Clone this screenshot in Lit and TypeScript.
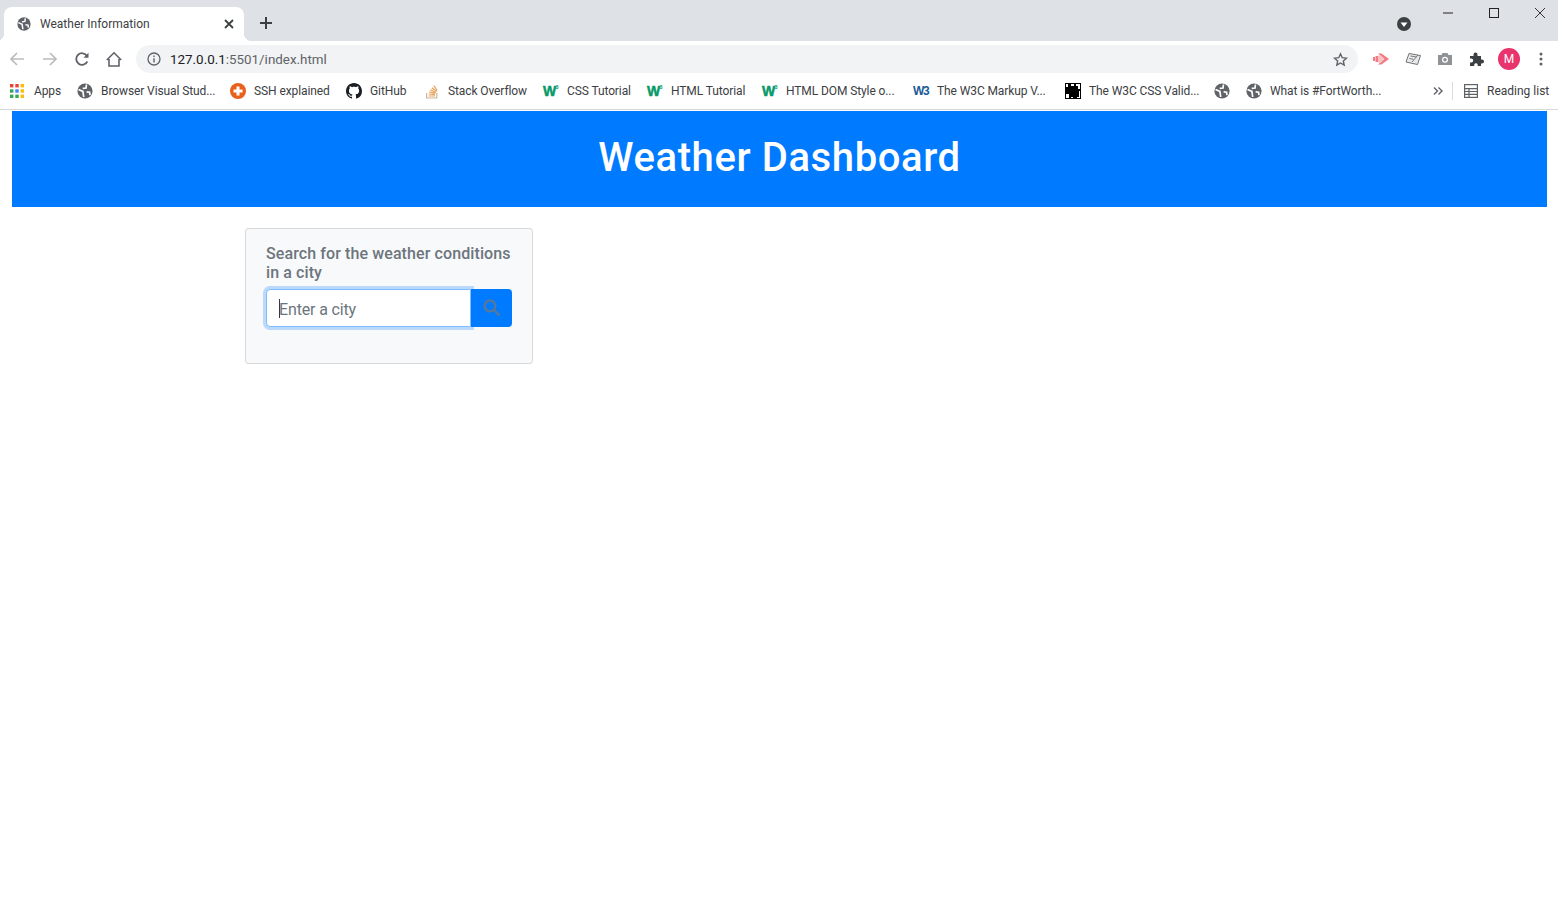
import { LitElement, html, css, svg } from "lit";
import { customElement } from "lit/decorators.js";

const globe = svg`<svg class="ico" viewBox="0 0 16 16"><circle cx="8" cy="8" r="7.600" fill="#5f6368"/><path fill="none" stroke="#fff" stroke-width="1.700" d="M1.500 6.400 5.900 8.400 6.700 14M9.500 1.500 9 5 5.700 5.400M9.600 8.800l3 .4 .4 3"/></svg>`;
const ssh = svg`<svg class="ico" viewBox="0 0 16 16"><circle cx="8" cy="8" r="8" fill="#e8611a"/><path fill="#fff" d="M6.500 3.500h3v3h3v3h-3v3h-3v-3h-3v-3h3z"/></svg>`;
const github = svg`<svg class="ico" viewBox="0 0 16 16"><path fill="#1b1f23" d="M8 0C3.580 0 0 3.580 0 8c0 3.540 2.290 6.530 5.470 7.590.4.070.55-.17.55-.38 0-.19-.01-.82-.01-1.490-2.010.37-2.530-.49-2.690-.94-.09-.23-.48-.94-.82-1.130-.28-.15-.68-.52-.01-.53.63-.01 1.080.58 1.230.82.72 1.210 1.870.87 2.330.66.07-.52.28-.87.51-1.070-1.780-.2-3.640-.89-3.640-3.950 0-.87.31-1.590.82-2.150-.08-.2-.36-1.020.08-2.120 0 0 .67-.21 2.200.82.64-.18 1.320-.27 2-.27.68 0 1.360.09 2 .27 1.530-1.040 2.200-.82 2.200-.82.44 1.100.16 1.920.08 2.120.51.56.82 1.270.82 2.150 0 3.070-1.870 3.750-3.650 3.950.29.25.54.73.54 1.480 0 1.070-.01 1.930-.01 2.200 0 .21.15.46.55.38A8.013 8.013 0 0 0 16 8c0-4.420-3.580-8-8-8z"/></svg>`;
const so = svg`<svg class="ico" viewBox="0 0 16 16" fill="none"><path stroke="#c8b79f" stroke-width="1.200" d="M2.600 10v5h10.200v-5"/><path stroke="#e8a35a" stroke-width="1.200" d="M4.600 13h6.400M4.800 11l6.200.6M5.300 8.900l6 1.400M6.300 6.800l5.500 2.700M7.900 4.700l4.700 3.800M9.800 2.700l3.400 4.800"/></svg>`;
const w3c = svg`<svg class="ico" viewBox="0 0 16 16"><rect width="16" height="16" fill="#000"/><path fill="#fff" d="M1 1h2v3H1zM6 1h3v2H6zM11 1h4v5h-2V3h-2zM14 8h1v7h-3v-1h2zM1 11h3v4H1zM6 14h2v1H6z"/></svg>`;
const apps = svg`<svg class="ico apps" viewBox="0 0 14 14"><g><rect x="0" y="0" width="3.400" height="3.400" fill="#ea4335"/><rect x="5.300" y="0" width="3.400" height="3.400" fill="#ea4335"/><rect x="10.600" y="0" width="3.400" height="3.400" fill="#fbbc04"/><rect x="0" y="5.300" width="3.400" height="3.400" fill="#34a853"/><rect x="5.300" y="5.300" width="3.400" height="3.400" fill="#4285f4"/><rect x="10.600" y="5.300" width="3.400" height="3.400" fill="#fbbc04"/><rect x="0" y="10.600" width="3.400" height="3.400" fill="#34a853"/><rect x="5.300" y="10.600" width="3.400" height="3.400" fill="#34a853"/><rect x="10.600" y="10.600" width="3.400" height="3.400" fill="#fbbc04"/></g></svg>`;
const w3s = html`<span class="w3s">W<sup>3</sup></span>`;
const w3org = html`<span class="w3o">W3</span>`;

interface Mark { icon: unknown; label?: string; width: number; }
const marks: Mark[] = [
  { icon: apps, label: "Apps", width: 27 },
  { icon: globe, label: "Browser Visual Stud...", width: 113 },
  { icon: ssh, label: "SSH explained", width: 76 },
  { icon: github, label: "GitHub", width: 38 },
  { icon: so, label: "Stack Overflow", width: 79 },
  { icon: w3s, label: "CSS Tutorial", width: 64 },
  { icon: w3s, label: "HTML Tutorial", width: 75 },
  { icon: w3s, label: "HTML DOM Style o...", width: 111 },
  { icon: w3org, label: "The W3C Markup V...", width: 112 },
  { icon: w3c, label: "The W3C CSS Valid...", width: 109 },
  { icon: globe, width: 0 },
  { icon: globe, label: "What is #FortWorth...", width: 113 },
];

@customElement("app-root")
export class AppRoot extends LitElement {
  static styles = css`
    :host { display: block; width: 1558px; height: 898px; background: #fff; overflow: hidden; font-family: Roboto, "Open Sans", sans-serif; color: #3c4043; }
    svg { display: block; flex: none; }
    .ico { width: 16px; height: 16px; }
    .apps { width: 14px; height: 14px; }

    .tabstrip { height: 41px; background: #dee1e6; display: flex; box-sizing: border-box; padding-left: 4px; }
    .tab { position: relative; margin-top: 7px; width: 240px; height: 34px; background: #fff; border-radius: 8px 8px 0 0; display: flex; align-items: center; padding: 0 10px 0 13px; box-sizing: border-box; font-size: 12px; }
    .tab::before, .tab::after { content: ""; position: absolute; bottom: 0; width: 8px; height: 8px; }
    .tab::before { left: -8px; background: radial-gradient(circle at 0 0, transparent 8px, #fff 8.500px); }
    .tab::after { right: -8px; background: radial-gradient(circle at 100% 0, transparent 8px, #fff 8.500px); }
    .tab .ico { width: 14px; height: 14px; }
    .tab-title { margin-left: 9px; flex: 1; white-space: nowrap; line-height: 14px; }
    .newtab { margin: 16px 0 0 15px; width: 14px; height: 14px; }
    .spacer { flex: 1; }
    .tabsearch { margin: 17px 14px 0 0; width: 14px; height: 14px; }
    .win { width: 46px; height: 26px; display: flex; justify-content: center; padding-top: 8px; box-sizing: border-box; }
    .win svg { width: 10px; height: 10px; }
    .wins { display: flex; margin-right: -5px; }

    .toolbar { height: 32px; display: flex; align-items: center; padding-left: 10px; box-sizing: border-box; }
    .nav { width: 14px; height: 14px; margin-right: 19px; margin-top: 4px; }
    .nav.reload { margin-right: 17px; margin-left: -1px; }
    .nav.home { margin-right: 14px; width: 16px; height: 16px; }
    .omni { width: 1222px; height: 28px; margin-top: 4px; border-radius: 14px; background: #f1f3f4; display: flex; align-items: center; padding: 0 10px 0 11px; box-sizing: border-box; font-size: 13.400px; }
    .omni .info { width: 14px; height: 14px; margin-right: 9px; }
    .url { flex: 1; color: #5f6368; }
    .url b { font-weight: 400; color: #202124; }
    .star { width: 15px; height: 15px; }
    .exts { display: flex; align-items: center; margin-top: 4px; margin-left: 15px; }
    .ext { width: 16px; height: 16px; margin-right: 16px; }
    .avatar { width: 22px; height: 22px; border-radius: 50%; background: #e8336d; color: #fff; font-size: 12px; display: flex; align-items: center; justify-content: center; margin-left: -3px; margin-right: 19px; }
    .dots { width: 4px; height: 14px; }

    .bookmarks { height: 37px; box-sizing: border-box; border-bottom: 1px solid #d6d8dc; display: flex; align-items: center; padding: 0 0 1px 10px; font-size: 12px; color: #3c4043; white-space: nowrap; }
    .mark { display: flex; align-items: center; margin-right: 16px; }
    .mark .lbl { margin-left: 8px; letter-spacing: -0.1px; }
    .mark.appsm .lbl { margin-left: 10px; }
    .w3s { width: 16px; height: 16px; display: block; font: 900 14px/16px "Liberation Sans", sans-serif; -webkit-text-stroke: 0.5px #07996a; color: #07996a; white-space: nowrap; letter-spacing: -0.5px; }
    .w3s sup { font: 700 5px/5px "Liberation Sans", sans-serif; -webkit-text-stroke: 0; vertical-align: 7px; letter-spacing: 0; }
    .w3o { width: 16px; height: 16px; display: block; font: 700 12px/16px "Liberation Sans", sans-serif; color: #1a5a96; letter-spacing: -1.300px; }
    .more { margin-left: 34px; width: 10px; height: 10px; }
    .sep { width: 1px; height: 18px; background: #dadce0; margin: 0 11px 0 9px; }
    .reading { width: 14px; height: 14px; margin-right: 9px; }

    .page { padding: 1px 11px 0 12px; }
    .banner { height: 96px; background: #007bff; color: #fff; display: flex; align-items: center; justify-content: center; }
    .banner h1 { margin: 0 0 2px; font-size: 40px; line-height: 48px; font-weight: 500; letter-spacing: 0.6px; }
    .row { padding: 21px 0 0 233px; }
    .card { width: 288px; height: 136px; box-sizing: border-box; background: #f8f9fa; border: 1px solid rgba(0,0,0,.125); border-radius: 4px; padding: 15px 20px 0; }
    .card h2 { margin: 0 -6px 7px 0; font-size: 16px; line-height: 19.200px; font-weight: 500; color: #6c757d; letter-spacing: 0.1px; }
    .group { display: flex; width: 246px; height: 38px; }
    .field { position: relative; flex: 1; display: flex; }
    .field input { width: 100%; box-sizing: border-box; height: 38px; padding: 3px 12px 0; border: 1px solid #80bdff; border-radius: 4px 0 0 4px; box-shadow: 0 0 0 3px rgba(0,123,255,.25); outline: none; font: 16px Roboto, sans-serif; letter-spacing: -0.15px; color: #495057; background: #fff; }
    .field input::placeholder { color: #6c757d; opacity: 1; }
    .caret { position: absolute; left: 13px; top: 10px; width: 1px; height: 19px; background: #343a40; }
    .go { width: 41px; height: 38px; border: 0; padding: 0; background: #007bff; border-radius: 0 4px 4px 0; display: flex; align-items: center; justify-content: center; position: relative; }
    .go svg { width: 17px; height: 17px; margin-bottom: 2px; }
  `;

  render() {
    return html`
      <div class="tabstrip">
        <div class="tab">${globe}<span class="tab-title">Weather Information</span>
          <svg viewBox="0 0 10 10" width="10" height="10"><path d="M1 1l8 8M9 1l-8 8" stroke="#3c4043" stroke-width="1.800"/></svg>
        </div>
        <svg class="newtab" viewBox="0 0 14 14"><path d="M7 1v12M1 7h12" stroke="#3c4043" stroke-width="2"/></svg>
        <div class="spacer"></div>
        <svg class="tabsearch" viewBox="0 0 14 14"><circle cx="7" cy="7" r="7" fill="#3c4043"/><path d="M3.500 5.500h7L7 10z" fill="#fff"/></svg>
        <div class="wins">
          <div class="win"><svg viewBox="0 0 10 10"><path d="M0 5h10" stroke="#222"/></svg></div>
          <div class="win"><svg viewBox="0 0 10 10"><rect x=".5" y=".5" width="9" height="9" fill="none" stroke="#222"/></svg></div>
          <div class="win"><svg viewBox="0 0 10 10"><path d="M0 0l10 10M10 0L0 10" stroke="#222" stroke-width=".9"/></svg></div>
        </div>
      </div>

      <div class="toolbar">
        <svg class="nav" viewBox="0 0 14 14" fill="none" stroke="#babcbe" stroke-width="1.700"><path d="M14 7H1.500M7 1 1 7l6 6"/></svg>
        <svg class="nav" viewBox="0 0 14 14" fill="none" stroke="#babcbe" stroke-width="1.700"><path d="M0 7h12.500M7 1l6 6-6 6"/></svg>
        <svg class="nav reload" viewBox="0 0 14 14" fill="none" stroke="#5f6368" stroke-width="1.800"><path d="M12.300 9.500A5.800 5.800 0 1 1 12 4"/><path d="M13.500 .8v5h-5z" fill="#5f6368" stroke="none"/></svg>
        <svg class="nav home" viewBox="0 0 16 16" fill="none" stroke="#5f6368" stroke-width="1.600"><path d="M3 8v7h10V8M.8 9 8 1.800 15.200 9"/></svg>
        <div class="omni">
          <svg class="info" viewBox="0 0 14 14"><circle cx="7" cy="7" r="6" fill="none" stroke="#5f6368" stroke-width="1.300"/><path d="M6.300 6.200h1.400v4.300H6.300zM6.300 3.500h1.400v1.400H6.300z" fill="#5f6368"/></svg>
          <span class="url"><b>127.0.0.1</b>:5501/index.html</span>
          <svg class="star" viewBox="0 0 24 24" fill="none" stroke="#5f6368" stroke-width="2.200"><path d="m12 3 2.800 6.100 6.700.8-5 4.500 1.400 6.600-5.900-3.400L6.100 21l1.400-6.600-5-4.500 6.700-.8z"/></svg>
        </div>
        <div class="exts">
          <svg class="ext" viewBox="0 0 16 16"><path d="M5 2.500h3.500L16 8l-7.500 5.500H5L11.500 8z" fill="#f47a82"/><path d="M0 6h2v4H0zM2.500 5H5v6H2.500z" fill="#f47a82"/><path d="M5 4.500h3L11 8l-3 3.500H5z" fill="#fbc0c3"/></svg>
          <svg class="ext" viewBox="0 0 16 16" fill="none" stroke="#6f7377"><path d="M4 2.500l11.500 2-3 9-11.500-2.500z" fill="#e8e9ea"/><path d="M5.500 5l6 1M4.500 7.500l4 .8M7 11l6-7" stroke-width=".9"/></svg>
          <svg class="ext" viewBox="0 0 16 16"><path d="M1 4h3.500l1-2h5l1 2H15v10H1z" fill="#909396"/><circle cx="8" cy="8.800" r="3" fill="#fff"/><circle cx="8" cy="8.800" r="1.800" fill="#909396"/></svg>
          <svg class="ext" viewBox="0 0 16 16"><path d="M1 5h3.500V3.500a2 2 0 0 1 4 0V5H12v3.500h1a2 2 0 0 1 0 4h-1V15H8.700v-1.300a1.800 1.800 0 0 0-3.500 0V15H1v-3.500h1.200a2 2 0 0 0 0-4H1z" fill="#3c4043"/></svg>
          <div class="avatar">M</div>
          <svg class="dots" viewBox="0 0 4 14"><circle cx="2" cy="2" r="1.500" fill="#5f6368"/><circle cx="2" cy="7" r="1.500" fill="#5f6368"/><circle cx="2" cy="12" r="1.500" fill="#5f6368"/></svg>
        </div>
      </div>

      <div class="bookmarks">
        ${marks.map((m, i) => html`<div class="mark ${i === 0 ? "appsm" : ""}">${m.icon}${m.label ? html`<span class="lbl" style="width:${m.width}px">${m.label}</span>` : ""}</div>`)}
        <svg class="more" viewBox="0 0 10 10" fill="none" stroke="#5f6368" stroke-width="1.400"><path d="M1 1.500 4.500 5 1 8.500M5.500 1.500 9 5 5.500 8.500"/></svg>
        <div class="sep"></div>
        <svg class="reading" viewBox="0 0 14 14" fill="none" stroke="#5f6368" stroke-width="1.200"><rect x=".6" y=".6" width="12.800" height="12.800"/><path d="M.6 4.600h12.800M.6 7.500h12.800M.6 10.400h12.800M5 4.600v8.800"/></svg>
        <span>Reading list</span>
      </div>

      <div class="page">
        <div class="banner"><h1>Weather Dashboard</h1></div>
        <div class="row">
          <div class="card">
            <h2>Search for the weather conditions in a city</h2>
            <div class="group">
              <div class="field"><input type="text" placeholder="Enter a city" /><span class="caret"></span></div>
              <div class="go"><svg viewBox="0 0 16 16" fill="none" stroke="#55789c" stroke-width="2.400"><circle cx="6.500" cy="6.500" r="5"/><path d="m10.500 10.500 5 5"/></svg></div>
            </div>
          </div>
        </div>
      </div>
    `;
  }
}
